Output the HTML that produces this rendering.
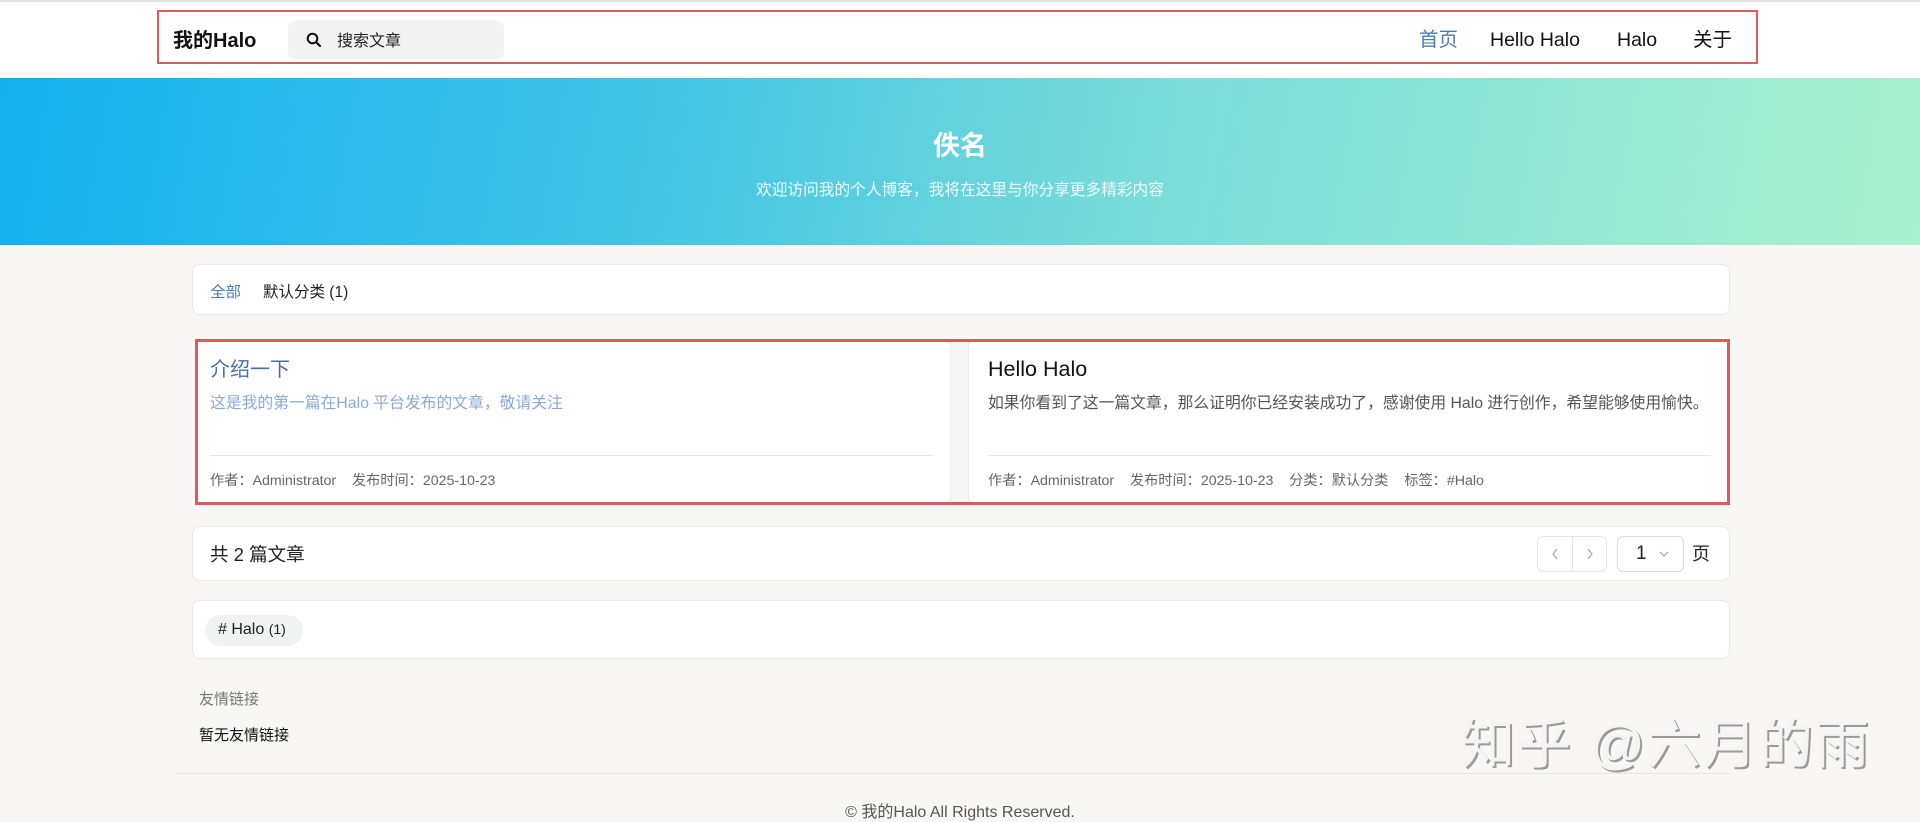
<!DOCTYPE html>
<html><head><meta charset="utf-8"><style>
*{box-sizing:border-box;margin:0;padding:0}
body{width:1920px;height:822px;overflow:hidden;background:#f8f7f5;font-family:"Liberation Sans","Noto Sans CJK SC",sans-serif;color:#222;position:relative;line-height:1.2}
.abs{position:absolute;white-space:nowrap}
.topline{left:0;top:0;width:1920px;height:2px;background:#dfe3df}
header{left:0;top:2px;width:1920px;height:76px;background:#fff}
.redhead{left:157px;top:10px;width:1601px;height:54px;border:2px solid #e05a5a}
.logo{left:173px;top:29px;font-size:20px;font-weight:bold;color:#111}
.search{left:288px;top:20px;width:216px;height:39px;background:#f3f3f3;border-radius:8px}
.search span{position:absolute;left:49px;top:12px;font-size:16px;color:#222}
.nav{top:29px;font-size:19.5px;color:#111}
.hero{left:0;top:78px;width:1920px;height:167px;background:linear-gradient(100deg,#15aff0 0%,#43c5e4 35%,#7adcd8 60%,#a9f1cf 100%)}
.hero h1{position:absolute;left:0;width:1920px;top:52px;text-align:center;color:#fff;font-size:27px;font-weight:bold;line-height:1.2}
.hero p{position:absolute;left:0;width:1920px;top:104px;text-align:center;color:#eefafc;font-size:15.7px;line-height:1.2}
.box{background:#fff;border:1px solid #e8e8e8;border-radius:8px}
.card{background:#fff;top:339px;height:165px}
.ttl{font-size:20px}
.desc{font-size:15.8px}
.meta{font-size:14.2px;color:#666}
.hr{height:1px;background:#e6e6e6}
</style></head><body>
<div class="abs topline"></div>
<header class="abs"></header>
<div class="abs redhead"></div>
<div class="abs logo">我的Halo</div>
<div class="abs search"><svg style="position:absolute;left:18px;top:12px" width="16" height="16" viewBox="0 0 16 16"><circle cx="6.5" cy="6.5" r="4.8" fill="none" stroke="#111" stroke-width="2"/><path d="M10 10l4 4" stroke="#111" stroke-width="2.2" stroke-linecap="round"/></svg><span>搜索文章</span></div>
<div class="abs nav" style="left:1419px;color:#4a7bbf">首页</div>
<div class="abs nav" style="left:1490px">Hello Halo</div>
<div class="abs nav" style="left:1617px">Halo</div>
<div class="abs nav" style="left:1693px">关于</div>
<div class="abs hero"><h1>佚名</h1><p>欢迎访问我的个人博客，我将在这里与你分享更多精彩内容</p></div>

<div class="abs box" style="left:192px;top:264px;width:1538px;height:51px"></div>
<div class="abs" style="left:210px;top:284px;font-size:15.5px;color:#4a7bbf">全部</div>
<div class="abs" style="left:263px;top:284px;font-size:15.5px">默认分类 (1)</div>

<div class="abs card" style="left:195px;width:756px;border:1px solid #ececec;border-radius:6px"></div>
<div class="abs card" style="left:968px;width:761px;border:1px solid #ececec;border-radius:6px"></div>
<div class="abs ttl" style="left:210px;top:358px;color:#4a6fa8">介绍一下</div>
<div class="abs desc" style="left:210px;top:395px;color:#8aaad6">这是我的第一篇在Halo 平台发布的文章，敬请关注</div>
<div class="abs hr" style="left:210px;top:455px;width:723px"></div>
<div class="abs meta" style="left:210px;top:473px">作者：Administrator&nbsp;&nbsp;&nbsp;&nbsp;发布时间：2025-10-23</div>
<div class="abs" style="left:988px;top:357px;color:#111;font-size:21.5px">Hello Halo</div>
<div class="abs desc" style="left:988px;top:395px;color:#555">如果你看到了这一篇文章，那么证明你已经安装成功了，感谢使用 Halo 进行创作，希望能够使用愉快。</div>
<div class="abs hr" style="left:988px;top:455px;width:723px"></div>
<div class="abs meta" style="left:988px;top:473px">作者：Administrator&nbsp;&nbsp;&nbsp;&nbsp;发布时间：2025-10-23&nbsp;&nbsp;&nbsp;&nbsp;分类：默认分类&nbsp;&nbsp;&nbsp;&nbsp;标签：#Halo</div>
<div class="abs" style="left:195px;top:339px;width:1535px;height:166px;border:3px solid #e05a5a"></div>

<div class="abs box" style="left:192px;top:526px;width:1538px;height:55px"></div>
<div class="abs" style="left:210px;top:544px;font-size:18.5px">共 2 篇文章</div>
<div class="abs" style="left:1537px;top:536px;width:70px;height:36px;border:1px solid #e4e4e4;border-radius:6px"></div>
<div class="abs" style="left:1572px;top:536px;width:1px;height:36px;background:#e4e4e4"></div>
<svg class="abs" style="left:1550px;top:548px" width="10" height="12" viewBox="0 0 10 12"><path d="M7 1L3 6l4 5" fill="none" stroke="#aaa" stroke-width="1.2"/></svg>
<svg class="abs" style="left:1585px;top:548px" width="10" height="12" viewBox="0 0 10 12"><path d="M3 1l4 5-4 5" fill="none" stroke="#aaa" stroke-width="1.2"/></svg>
<div class="abs" style="left:1617px;top:536px;width:67px;height:36px;border:1px solid #ddd;border-radius:6px"></div>
<div class="abs" style="left:1636px;top:543px;font-size:19px">1</div>
<svg class="abs" style="left:1658px;top:549px" width="12" height="10" viewBox="0 0 12 10"><path d="M2 3l4 4 4-4" fill="none" stroke="#aaa" stroke-width="1.2"/></svg>
<div class="abs" style="left:1692px;top:544px;font-size:18px">页</div>

<div class="abs box" style="left:192px;top:600px;width:1538px;height:59px"></div>
<div class="abs" style="left:205px;top:615px;width:98px;height:31px;background:#f1f2f3;border-radius:16px"></div>
<div class="abs" style="left:218px;top:620px;font-size:16px">#&nbsp;Halo <span style="font-size:14px">(1)</span></div>

<div class="abs" style="left:199px;top:691px;font-size:15px;color:#777">友情链接</div>
<div class="abs" style="left:199px;top:727px;font-size:15px;color:#111">暂无友情链接</div>
<div class="abs" style="left:1461px;top:713px;font-size:54px;color:#f4f4f4;text-shadow:2px 2px 0 #9a9a9a;letter-spacing:2px;line-height:1.2">知乎 @六月的雨</div>
<div class="abs hr" style="left:174px;top:773px;width:1556px"></div>
<div class="abs" style="left:0;width:1920px;text-align:center;top:803px;font-size:16px;color:#555">© 我的Halo All Rights Reserved.</div>
</body></html>
